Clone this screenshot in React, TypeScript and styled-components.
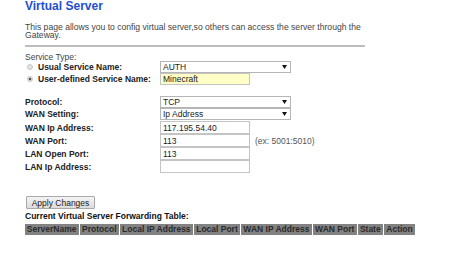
import styled, { createGlobalStyle } from "styled-components";

const GlobalStyle = createGlobalStyle`
  body {
    margin: 0;
    background: #fff;
    font-family: "Liberation Sans", Arial, sans-serif;
    color: #222;
  }
`;

const Page = styled.div`
  padding-left: 25px;
  font-size: 8.5px;
`;

const Title = styled.h1`
  margin: 0;
  font-size: 12px;
  line-height: 12px;
  font-weight: bold;
  color: #1f4fcf;
`;

const Intro = styled.p`
  margin: 11px 0 0;
  width: 345px;
  line-height: 8px;
  font-size: 8.6px;
  color: #444;
`;

const Divider = styled.div`
  margin-top: 6px;
  width: 340px;
  height: 2px;
  background: #bdbdbd;
`;

const SectionLabel = styled.div`
  margin-top: 7px;
  height: 7px;
  line-height: 7px;
  color: #444;
`;

const Rows = styled.div<{ $top: number }>`
  margin-top: ${(p) => p.$top}px;
  display: flex;
  flex-direction: column;
`;

const Row = styled.div<{ $h: number }>`
  display: flex;
  align-items: center;
  height: ${(p) => p.$h}px;
`;

const Label = styled.div<{ $radio?: boolean }>`
  width: ${(p) => (p.$radio ? 133 : 135)}px;
  padding-left: ${(p) => (p.$radio ? 2 : 0)}px;
  display: flex;
  align-items: center;
  gap: 5px;
  font-weight: bold;
  color: #222;
  flex-shrink: 0;
`;

const RadioDot = styled.span<{ $on?: boolean }>`
  width: 6px;
  height: 6px;
  border-radius: 50%;
  background: ${(p) => (p.$on ? "radial-gradient(circle, #555 0 1.2px, #d4d4d4 1.6px)" : "#e2e2e2")};
  border: 0.5px solid #c8c8c8;
  box-sizing: border-box;
`;

const SelectBox = styled.div`
  box-sizing: border-box;
  width: 131px;
  height: 12px;
  border: 1px solid #b5b5b5;
  background: #fff;
  display: flex;
  align-items: center;
  justify-content: space-between;
  padding: 0 3px 0 2px;
  color: #222;
  font-size: 8.5px;
`;

const TextBox = styled.input<{ $filled?: boolean; $h?: number }>`
  box-sizing: border-box;
  width: 90px;
  height: ${(p) => p.$h ?? 13}px;
  margin: 0;
  padding: 0 2px;
  border: 1px solid #c4c4c4;
  background: ${(p) => (p.$filled ? "#ffffc6" : "#fff")};
  font-family: "Liberation Sans", Arial, sans-serif;
  font-size: 8.5px;
  color: #222;
  outline: none;
`;

const Hint = styled.span`
  margin-left: 5px;
  color: #555;
`;

const ApplyButton = styled.button`
  margin-top: 23px;
  margin-left: 1px;
  width: 69px;
  height: 13px;
  padding: 0;
  display: block;
  border: 1px solid #a9a9a9;
  border-radius: 1px;
  background: linear-gradient(#f4f4f4, #dcdcdc);
  font-family: "Liberation Sans", Arial, sans-serif;
  font-size: 8.5px;
  color: #222;
`;

const Caption = styled.div`
  margin-top: 3px;
  line-height: 8px;
  font-weight: bold;
  color: #111;
`;

const HeaderTable = styled.table`
  margin-top: 4px;
  margin-left: -1.5px;
  border-collapse: separate;
  border-spacing: 1.5px 0;
`;

const HeaderCell = styled.th`
  height: 11px;
  padding: 0 2.3px;
  background: #828282;
  color: #2b2b2b;
  font-size: 8.5px;
  font-weight: bold;
  white-space: nowrap;
  line-height: 11px;
`;

const Arrow = () => (
  <svg width="5" height="4" viewBox="0 0 5 4">
    <path d="M0 0h5L2.5 4z" fill="#111" />
  </svg>
);

const columns = [
  "ServerName",
  "Protocol",
  "Local IP Address",
  "Local Port",
  "WAN IP Address",
  "WAN Port",
  "State",
  "Action",
];

export default function App() {
  return (
    <>
      <GlobalStyle />
      <Page>
        <Title>Virtual Server</Title>
        <Intro>
          This page allows you to config virtual server,so others can access the server through the
          Gateway.
        </Intro>
        <Divider />
        <SectionLabel>Service Type:</SectionLabel>
        <Rows $top={0}>
          <Row $h={12}>
            <Label $radio>
              <RadioDot />
              Usual Service Name:
            </Label>
            <SelectBox>
              AUTH
              <Arrow />
            </SelectBox>
          </Row>
          <Row $h={12}>
            <Label $radio>
              <RadioDot $on />
              User-defined Service Name:
            </Label>
            <TextBox $filled $h={12} defaultValue="Minecraft" />
          </Row>
        </Rows>
        <Rows $top={11}>
          <Row $h={12}>
            <Label>Protocol:</Label>
            <SelectBox>
              TCP
              <Arrow />
            </SelectBox>
          </Row>
          <Row $h={12}>
            <Label>WAN Setting:</Label>
            <SelectBox>
              Ip Address
              <Arrow />
            </SelectBox>
          </Row>
          <Row $h={1} />
          <Row $h={13}>
            <Label>WAN Ip Address:</Label>
            <TextBox defaultValue="117.195.54.40" />
          </Row>
          <Row $h={13}>
            <Label>WAN Port:</Label>
            <TextBox defaultValue="113" />
            <Hint>(ex: 5001:5010)</Hint>
          </Row>
          <Row $h={13}>
            <Label>LAN Open Port:</Label>
            <TextBox defaultValue="113" />
          </Row>
          <Row $h={13}>
            <Label>LAN Ip Address:</Label>
            <TextBox defaultValue="" />
          </Row>
        </Rows>
        <ApplyButton>Apply Changes</ApplyButton>
        <Caption>Current Virtual Server Forwarding Table:</Caption>
        <HeaderTable>
          <thead>
            <tr>
              {columns.map((c) => (
                <HeaderCell key={c}>{c}</HeaderCell>
              ))}
            </tr>
          </thead>
        </HeaderTable>
      </Page>
    </>
  );
}
